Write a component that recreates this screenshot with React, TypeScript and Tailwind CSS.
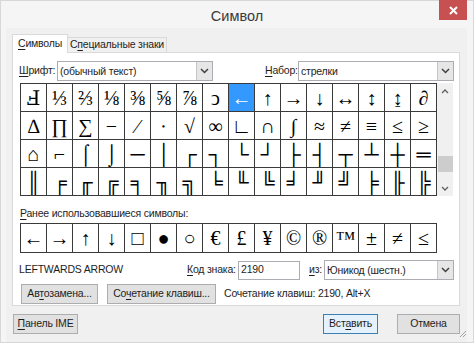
import React from "react";

const grid: string[][] = [
  ["Ⅎ", "⅓", "⅔", "⅛", "⅜", "⅝", "⅞", "ↄ", "←", "↑", "→", "↓", "↔", "↕", "↨", "∂"],
  ["∆", "∏", "∑", "−", "∕", "∙", "√", "∞", "∟", "∩", "∫", "≈", "≠", "≡", "≤", "≥"],
  ["⌂", "⌐", "⌠", "⌡", "─", "│", "┌", "┐", "└", "┘", "├", "┤", "┬", "┴", "┼", "═"],
  ["║", "╒", "╓", "╔", "╕", "╖", "╗", "╘", "╙", "╚", "╛", "╜", "╝", "╞", "╟", "╠"],
];

const recent = ["←", "→", "↑", "↓", "□", "●", "○", "€", "£", "¥", "©", "®", "™", "±", "≠", "≤"];

const U = ({ c }: { c: string }) => <span className="underline underline-offset-[2px]">{c}</span>;

const Chevron = () => (
  <svg width="9" height="6" viewBox="0 0 9 6">
    <polyline points="1,1 4.5,4.5 8,1" fill="none" stroke="#404040" strokeWidth="1.5" />
  </svg>
);

const Select = ({ text, w }: { text: string; w: string }) => (
  <div className={`${w} h-[20px] bg-white border border-[#abadb3] flex items-center justify-between`}>
    <span className="pl-[2px] leading-none whitespace-nowrap">{text}</span>
    <div className="w-[16px] h-[18px] bg-[#e6e6e6] border-l border-[#c5c5c5] flex items-center justify-center">
      <Chevron />
    </div>
  </div>
);

const Btn = ({ children, w, def }: { children: React.ReactNode; w: string; def?: boolean }) => (
  <div
    className={`${w} h-[20px] flex items-center justify-center border whitespace-nowrap ${
      def ? "border-[#3c7fb1] bg-[#e5f1fb]" : "border-[#adadad] bg-[#e1e1e1]"
    }`}
  >
    {children}
  </div>
);

export default function App() {
  return (
    <div className="w-[474px] h-[348px] bg-white text-[10.5px] tracking-[-0.2px] text-[#1e1e1e] overflow-hidden font-['Liberation_Sans',Arial,sans-serif] whitespace-nowrap">
      <div className="w-[474px] h-[343px] bg-[#f5f5f5] border border-[#d8d8d8] flex flex-col">
        {/* title bar */}
        <div className="h-[27px] flex items-start relative">
          <div className="flex-1 text-center text-[14.5px] tracking-normal text-[#3a3a3a] pt-[5px]">Символ</div>
          <div className="absolute right-[6px] top-[-1px] w-[28px] h-[20px] bg-[#c75050] flex items-center justify-center">
            <svg width="9" height="9" viewBox="0 0 9 9">
              <path d="M1 1 L8 8 M8 1 L1 8" stroke="white" strokeWidth="2" />
            </svg>
          </div>
        </div>
        {/* client */}
        <div className="ml-[5px] mr-[6px] h-[314px] bg-[#f0f0f0] flex flex-col">
          {/* tabs */}
          <div className="flex items-end h-[24px] pl-[6px] relative z-10">
            <div className="h-[19px] w-[56px] bg-white border border-[#d9d9d9] border-b-0 flex items-center justify-center -mb-px">
              <span>
                <U c="С" />имволы
              </span>
            </div>
            <div className="h-[15px] w-[99px] bg-[#f0f0f0] border border-[#d9d9d9] border-l-0 border-b-0 flex items-center justify-center">
              <span>
                С<U c="п" />ециальные знаки
              </span>
            </div>
          </div>
          {/* panel */}
          <div className="ml-[6px] w-[448px] h-[254px] bg-white border border-[#d9d9d9] flex flex-col">
            {/* font row */}
            <div className="flex items-center mt-[8px] h-[20px]">
              <span className="ml-[6px] w-[38px]">
                <U c="Ш" />рифт:
              </span>
              <Select text="(обычный текст)" w="w-[156px]" />
              <span className="ml-[52px] w-[33px]">
                <U c="Н" />абор:
              </span>
              <Select text="стрелки" w="w-[156px]" />
            </div>
            {/* grid */}
            <div className="flex ml-[7px] mt-[2px]">
              <div className="grid grid-cols-[repeat(16,25px)] gap-px bg-[#3a3a3a] p-px font-['Liberation_Serif','DejaVu_Serif',serif] tracking-normal">
                {grid.flat().map((s, i) => (
                  <div
                    key={i}
                    className={`h-[27px] flex items-center justify-center text-[20px] leading-none ${
                      i === 8 ? "bg-[#3399ff] text-white" : "bg-white text-black"
                    }`}
                  >
                    {s}
                  </div>
                ))}
              </div>
              <div className="w-[16px] h-[113px] bg-[#f0f0f0] flex flex-col items-center">
                <div className="h-[16px] flex items-center justify-center">
                  <svg width="8" height="5" viewBox="0 0 8 5">
                    <polyline points="1,4 4,1 7,4" fill="none" stroke="#606060" strokeWidth="1.3" />
                  </svg>
                </div>
                <div className="h-[57px]" />
                <div className="w-[15px] h-[16px] bg-[#cdcdcd]" />
                <div className="flex-1" />
                <div className="h-[16px] flex items-center justify-center">
                  <svg width="8" height="5" viewBox="0 0 8 5">
                    <polyline points="1,1 4,4 7,1" fill="none" stroke="#606060" strokeWidth="1.3" />
                  </svg>
                </div>
              </div>
            </div>
            {/* recent label */}
            <div className="ml-[7px] mt-[9px] h-[17px] leading-[17px]">
              <U c="Р" />анее использовавшиеся символы:
            </div>
            <div className="ml-[7px] mt-[1px] grid grid-cols-[repeat(16,25px)] gap-px bg-[#3a3a3a] p-px w-max font-['Liberation_Serif','DejaVu_Serif',serif] tracking-normal">
              {recent.map((s, i) => (
                <div
                  key={i}
                  className="h-[28px] bg-white text-black flex items-center justify-center text-[20px] leading-none"
                >
                  {s}
                </div>
              ))}
            </div>
            {/* name / code row */}
            <div className="flex items-center mt-[7px] h-[20px]">
              <span className="ml-[6px] w-[168px]">LEFTWARDS ARROW</span>
              <span className="w-[51px]">
                <U c="К" />од знака:
              </span>
              <div className="w-[62px] h-[19px] bg-white border border-[#abadb3] flex items-center pl-[2px]">2190</div>
              <span className="ml-[9px] w-[15px]">
                <U c="и" />з:
              </span>
              <Select text="Юникод (шестн.)" w="w-[130px]" />
            </div>
            {/* buttons row */}
            <div className="flex items-center mt-[4px]">
              <div className="ml-[8px]">
                <Btn w="w-[77px]">
                  <span>
                    Ав<U c="т" />озамена...
                  </span>
                </Btn>
              </div>
              <div className="ml-[9px]">
                <Btn w="w-[109px]">
                  <span>
                    Со<U c="ч" />етание клавиш...
                  </span>
                </Btn>
              </div>
              <span className="ml-[8px]">Сочетание клавиш: 2190, Alt+X</span>
            </div>
          </div>
          {/* bottom buttons */}
          <div className="flex items-center mt-[8px] relative">
            <div className="ml-[7px]">
              <Btn w="w-[65px]">
                <span>
                  <U c="П" />анель IME
                </span>
              </Btn>
            </div>
            <div className="flex-1" />
            <Btn w="w-[55px]" def>
              <span>
                Вст<U c="а" />вить
              </span>
            </Btn>
            <div className="ml-[19px] mr-[7px]">
              <Btn w="w-[63px]">Отмена</Btn>
            </div>
            <svg className="absolute right-[0px] top-[16px]" width="8" height="8" viewBox="0 0 8 8">
              <path d="M7 1 L1 7 M7 4 L4 7" stroke="#a0a0a0" strokeWidth="1" />
            </svg>
          </div>
        </div>
      </div>
    </div>
  );
}
